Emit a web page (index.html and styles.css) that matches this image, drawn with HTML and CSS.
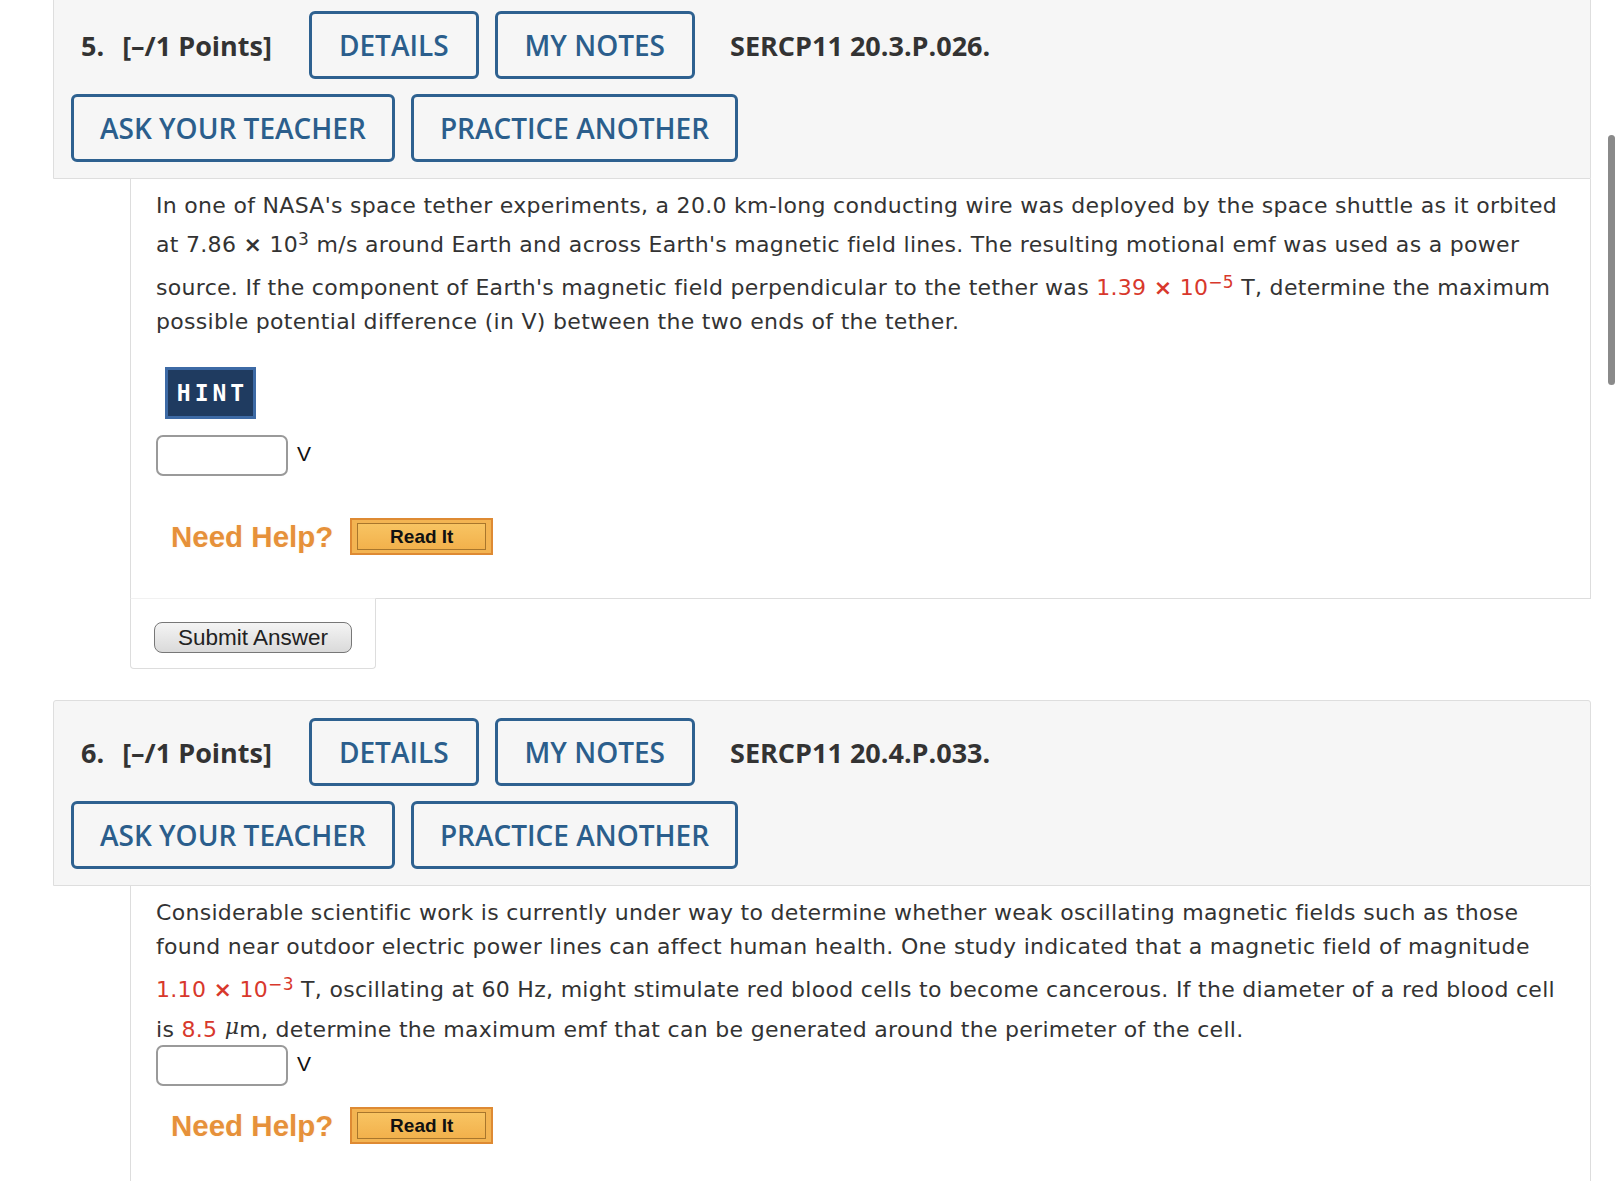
FILE: index.html
```html
<!DOCTYPE html>
<html lang="en">
<head>
<meta charset="utf-8">
<title>Questions</title>
<link rel="stylesheet" href="styles.css">
</head>
<body>
<main class="page">

  <section class="question question-first">
    <header class="q-head">
      <div class="q-row">
        <span class="q-num">5.</span>
        <span class="q-points">[–/1 Points]</span>
        <button class="q-btn q-btn-short">DETAILS</button>
        <button class="q-btn q-btn-short">MY NOTES</button>
        <span class="q-code">SERCP11 20.3.P.026.</span>
      </div>
      <div class="q-row">
        <button class="q-btn">ASK YOUR TEACHER</button>
        <button class="q-btn">PRACTICE ANOTHER</button>
      </div>
    </header>
    <div class="q-body">
      <p class="q-text">In one of NASA's space tether experiments, a 20.0 km-long conducting wire was deployed by the space shuttle as it orbited at 7.86 <b class="times">×</b> 10<sup>3</sup> m/s around Earth and across Earth's magnetic field lines. The resulting motional emf was used as a power source. If the component of Earth's magnetic field perpendicular to the tether was <span class="red">1.39 <b class="times">×</b> 10<sup class="sup-tall">−5</sup></span> T, determine the maximum possible potential difference (in V) between the two ends of the tether.</p>
      <button class="hint">HINT</button>
      <div class="answer">
        <input class="answer-input" type="text" aria-label="answer">
        <span class="unit">V</span>
      </div>
      <div class="help help-wide">
        <span class="need-help">Need Help?</span>
        <button class="read-it"><span>Read It</span></button>
      </div>
    </div>
    <div class="submit-box">
      <button class="submit">Submit Answer</button>
    </div>
  </section>

  <section class="question">
    <header class="q-head">
      <div class="q-row">
        <span class="q-num">6.</span>
        <span class="q-points">[–/1 Points]</span>
        <button class="q-btn q-btn-short">DETAILS</button>
        <button class="q-btn q-btn-short">MY NOTES</button>
        <span class="q-code">SERCP11 20.4.P.033.</span>
      </div>
      <div class="q-row">
        <button class="q-btn">ASK YOUR TEACHER</button>
        <button class="q-btn">PRACTICE ANOTHER</button>
      </div>
    </header>
    <div class="q-body q-body-open">
      <p class="q-text">Considerable scientific work is currently under way to determine whether weak oscillating magnetic fields such as those found near outdoor electric power lines can affect human health. One study indicated that a magnetic field of magnitude <span class="red">1.10 <b class="times">×</b> 10<sup class="sup-tall">−3</sup></span> T, oscillating at 60 Hz, might stimulate red blood cells to become cancerous. If the diameter of a red blood cell is <span class="red">8.5</span> <i class="mu">μ</i>m, determine the maximum emf that can be generated around the perimeter of the cell.</p>
      <div class="answer answer-tight">
        <input class="answer-input" type="text" aria-label="answer">
        <span class="unit">V</span>
      </div>
      <div class="help">
        <span class="need-help">Need Help?</span>
        <button class="read-it"><span>Read It</span></button>
      </div>
    </div>
  </section>

</main>
<div class="scrollbar"></div>
</body>
</html>
```

FILE: styles.css
```css
html, body {
  margin: 0;
  padding: 0;
  background: #ffffff;
  overflow: hidden;
}

.page {
  margin: 0 29px 0 53px;
  display: flex;
  flex-direction: column;
}

.question {
  display: flex;
  flex-direction: column;
  margin-bottom: 31px;
}

.question-first {
  margin-top: -7px;
}

/* header */
.q-head {
  background: #f6f6f6;
  border: 1px solid #dedede;
  border-radius: 3px 3px 0 0;
  padding: 17px 18px 16px 17px;
  display: flex;
  flex-direction: column;
  gap: 15px;
  font-family: "Open Sans", "Liberation Sans", sans-serif;
}

.q-row {
  display: flex;
  align-items: center;
  gap: 16px;
}

.q-num {
  font-size: 27px;
  font-weight: 700;
  color: #333333;
  margin-left: 10px;
  margin-right: 2px;
}

.q-points {
  font-size: 27px;
  font-weight: 700;
  color: #333333;
  margin-right: 21px;
}

.q-code {
  font-size: 27px;
  font-weight: 700;
  color: #333333;
  margin-left: 19px;
}

.q-btn {
  height: 68px;
  box-sizing: border-box;
  padding: 0 26px;
  border: 3px solid #2e6190;
  border-radius: 6px;
  background: transparent;
  color: #2b5e8c;
  font-family: "Open Sans", "Liberation Sans", sans-serif;
  font-size: 28px;
  font-weight: 600;
  display: inline-flex;
  align-items: center;
  justify-content: center;
  white-space: nowrap;
}

.q-btn-short {
  padding: 0 27px;
}

/* body */
.q-body {
  margin-left: 77px;
  border-left: 1px solid #dddddd;
  border-right: 1px solid #dddddd;
  border-bottom: 1px solid #dddddd;
  padding: 10px 25px 43px 25px;
  display: flex;
  flex-direction: column;
  align-items: flex-start;
}

.q-body-open {
  border-bottom: none;
  min-height: 400px;
}

.q-text {
  margin: 0;
  font-family: "DejaVu Sans", Verdana, sans-serif;
  font-size: 22px;
  letter-spacing: 0.3px;
  line-height: 34px;
  color: #333333;
}

.q-text sup {
  font-size: 17px;
  line-height: 32px;
  vertical-align: 7px;
}

.q-text .sup-tall {
  line-height: 40px;
}

.times {
  font-weight: 700;
}

.red {
  color: #d8382c;
}

.mu {
  font-family: "DejaVu Serif", "Liberation Serif", serif;
  font-style: italic;
  line-height: 40px;
  vertical-align: 3px;
}

.hint {
  margin-top: 28px;
  margin-left: 9px;
  width: 91px;
  height: 52px;
  box-sizing: border-box;
  background: #1f3b60;
  border: 3px solid #3d6aa5;
  color: #ffffff;
  font-family: "DejaVu Sans Mono", "Liberation Mono", monospace;
  font-weight: 700;
  font-size: 23px;
  letter-spacing: 4px;
  padding: 0 0 0 4px;
  display: flex;
  align-items: center;
  justify-content: center;
}

.answer {
  margin-top: 16px;
  display: flex;
  align-items: center;
  gap: 9px;
}

.answer-tight {
  margin-top: -2px;
}

.answer-input {
  width: 132px;
  height: 41px;
  box-sizing: border-box;
  border: 2px solid #9a9a9a;
  border-radius: 7px;
  background: #ffffff;
  margin: 0;
}

.unit {
  font-family: "Liberation Sans", Arial, sans-serif;
  font-size: 21px;
  color: #111111;
  margin-top: -4px;
}

.help {
  margin-top: 21px;
  margin-left: 15px;
  display: flex;
  align-items: center;
  gap: 17px;
}

.help-wide {
  margin-top: 42px;
}

.need-help {
  font-family: "Liberation Sans", Arial, sans-serif;
  font-weight: 700;
  font-size: 29.5px;
  color: #e6913a;
  text-shadow: 0 0 3px #fff4e6;
}

.read-it {
  width: 143px;
  height: 37px;
  box-sizing: border-box;
  padding: 3px 5px;
  border: 2px solid #de8a33;
  background: #f3b452;
  display: flex;
  align-items: stretch;
}

.read-it span {
  flex: 1;
  border: 1px solid #a8762c;
  background: linear-gradient(#f8c462, #f2b14c);
  font-family: "Liberation Sans", Arial, sans-serif;
  font-weight: 700;
  font-size: 19px;
  color: #111111;
  display: flex;
  align-items: center;
  justify-content: center;
}

.submit-box {
  width: 246px;
  box-sizing: border-box;
  margin-left: 77px;
  margin-top: -1px;
  border: 1px solid #dddddd;
  border-top-color: #f1f1f1;
  border-radius: 0 0 4px 4px;
  padding: 23px 0 15px 23px;
}

.submit {
  width: 198px;
  height: 31px;
  box-sizing: border-box;
  border: 1.5px solid #777777;
  border-radius: 8px;
  background: linear-gradient(#f4f4f4, #dadada);
  font-family: "Liberation Sans", Arial, sans-serif;
  font-size: 22.5px;
  color: #222222;
  padding: 0;
  display: flex;
  align-items: center;
  justify-content: center;
}

.scrollbar {
  position: fixed;
  top: 135px;
  right: 5px;
  width: 7px;
  height: 250px;
  border-radius: 4px;
  background: #8a8a8a;
}
```
